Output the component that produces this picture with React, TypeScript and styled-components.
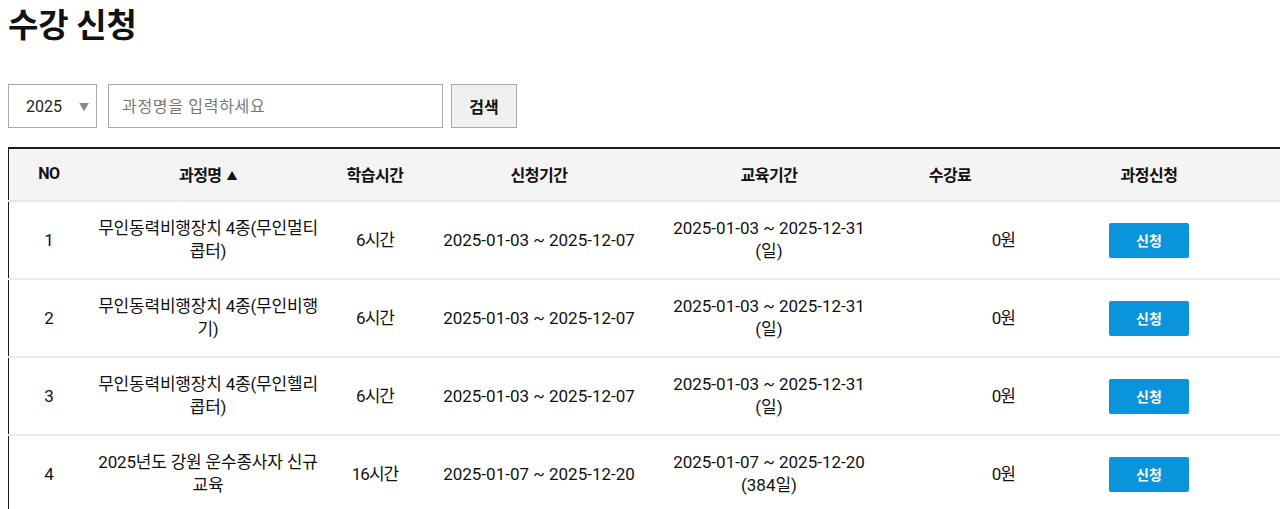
import React from "react";
import styled, { createGlobalStyle } from "styled-components";

const GlobalStyle = createGlobalStyle`
  html, body {
    margin: 0;
    padding: 0;
    background: #ffffff;
    overflow: hidden;
  }
  body {
    padding: 0 8px;
    font-family: "Roboto", "Noto Sans CJK KR", "Noto Sans", sans-serif;
    color: #111;
  }
`;

const Page = styled.div`
  width: 1272px;
`;

const Title = styled.h1`
  margin: 0;
  padding-top: 1px;
  font-family: "Noto Sans CJK KR", sans-serif;
  font-size: 33px;
  line-height: 44px;
  font-weight: 700;
  letter-spacing: 0;
  color: #111;
`;

const SearchBar = styled.form`
  display: flex;
  align-items: stretch;
  margin-top: 39px;
  height: 44px;
`;

const SelectBox = styled.div`
  position: relative;
  width: 89px;
  box-sizing: border-box;
  border: 1px solid #a9a9a9;
  display: flex;
  align-items: center;
  padding-left: 17px;
  font-size: 16px;
  color: #222;
`;

const Arrow = styled.span`
  position: absolute;
  right: 7px;
  top: 50%;
  transform: translateY(-50%);
  font-size: 10px;
  color: #888;
`;

const TextInput = styled.input`
  margin-left: 11px;
  width: 335px;
  box-sizing: border-box;
  border: 1px solid #a9a9a9;
  padding: 0 13px;
  font-family: inherit;
  font-size: 16px;
  letter-spacing: 0.7px;
  color: #222;
  outline: none;
  &::placeholder {
    color: #777;
  }
`;

const SearchButton = styled.button`
  margin-left: 8px;
  width: 66px;
  box-sizing: border-box;
  border: 1px solid #a9a9a9;
  background: #f0f0f0;
  font-family: inherit;
  font-size: 16px;
  font-weight: 700;
  color: #111;
  padding: 0;
`;

const Table = styled.table`
  margin-top: 19px;
  width: 1272px;
  border-collapse: collapse;
  table-layout: fixed;
  border-top: 2px solid #1a1a1a;
  border-left: 1px solid #1a1a1a;
`;

const HeadCell = styled.th<{ $w: number }>`
  width: ${(p) => p.$w}px;
  height: 49px;
  padding: 0 0 2px;
  background: #f4f4f4;
  border-bottom: 2px solid #e8e8e8;
  font-size: 16px;
  font-weight: 700;
  color: #111;
  text-align: center;
  letter-spacing: -0.5px;
`;

const SortMark = styled.span`
  margin-left: 5px;
  font-size: 11px;
  vertical-align: 1px;
`;

const Row = styled.tr`
  border-bottom: 2px solid #ebebeb;
`;

const Cell = styled.td<{ $align?: "center" | "right"; $tight?: number }>`
  height: 76px;
  padding: 0 ${(p) => (p.$align === "right" ? "2px" : "7px")} 0 7px;
  text-align: ${(p) => p.$align ?? "center"};
  font-size: 17px;
  line-height: 23px;
  color: #111;
  letter-spacing: ${(p) => p.$tight ?? 0}px;
  vertical-align: middle;
`;

const ApplyButton = styled.button`
  width: 80px;
  height: 35px;
  border: none;
  border-radius: 2px;
  background: #0a94dc;
  color: #fff;
  font-family: inherit;
  font-size: 14px;
  font-weight: 700;
  letter-spacing: 0;
  cursor: pointer;
`;

const columns = [
  { label: "NO", w: 80 },
  { label: "과정명", w: 238, sort: true },
  { label: "학습시간", w: 96 },
  { label: "신청기간", w: 232 },
  { label: "교육기간", w: 228 },
  { label: "수강료", w: 134 },
  { label: "과정신청", w: 264 },
];

const courses = [
  {
    no: 1,
    name: "무인동력비행장치 4종(무인멀티콥터)",
    hours: "6시간",
    apply: "2025-01-03 ~ 2025-12-07",
    edu: "2025-01-03 ~ 2025-12-31",
    days: "(일)",
    fee: "0원",
  },
  {
    no: 2,
    name: "무인동력비행장치 4종(무인비행기)",
    hours: "6시간",
    apply: "2025-01-03 ~ 2025-12-07",
    edu: "2025-01-03 ~ 2025-12-31",
    days: "(일)",
    fee: "0원",
  },
  {
    no: 3,
    name: "무인동력비행장치 4종(무인헬리콥터)",
    hours: "6시간",
    apply: "2025-01-03 ~ 2025-12-07",
    edu: "2025-01-03 ~ 2025-12-31",
    days: "(일)",
    fee: "0원",
  },
  {
    no: 4,
    name: "2025년도 강원 운수종사자 신규교육",
    hours: "16시간",
    apply: "2025-01-07 ~ 2025-12-20",
    edu: "2025-01-07 ~ 2025-12-20",
    days: "(384일)",
    fee: "0원",
  },
];

export default function App() {
  return (
    <Page>
      <GlobalStyle />
      <Title>수강 신청</Title>
      <SearchBar onSubmit={(e) => e.preventDefault()}>
        <SelectBox>
          2025
          <Arrow>▼</Arrow>
        </SelectBox>
        <TextInput placeholder="과정명을 입력하세요" />
        <SearchButton type="submit">검색</SearchButton>
      </SearchBar>
      <Table>
        <thead>
          <tr>
            {columns.map((c) => (
              <HeadCell key={c.label} $w={c.w}>
                {c.label}
                {c.sort && <SortMark>▲</SortMark>}
              </HeadCell>
            ))}
          </tr>
        </thead>
        <tbody>
          {courses.map((c) => (
            <Row key={c.no}>
              <Cell>{c.no}</Cell>
              <Cell $tight={-0.2}>{c.name}</Cell>
              <Cell $tight={-1}>{c.hours}</Cell>
              <Cell>{c.apply}</Cell>
              <Cell>
                {c.edu}
                <br />
                {c.days}
              </Cell>
              <Cell $align="right" $tight={-1}>
                {c.fee}
              </Cell>
              <Cell>
                <ApplyButton>신청</ApplyButton>
              </Cell>
            </Row>
          ))}
        </tbody>
      </Table>
    </Page>
  );
}
